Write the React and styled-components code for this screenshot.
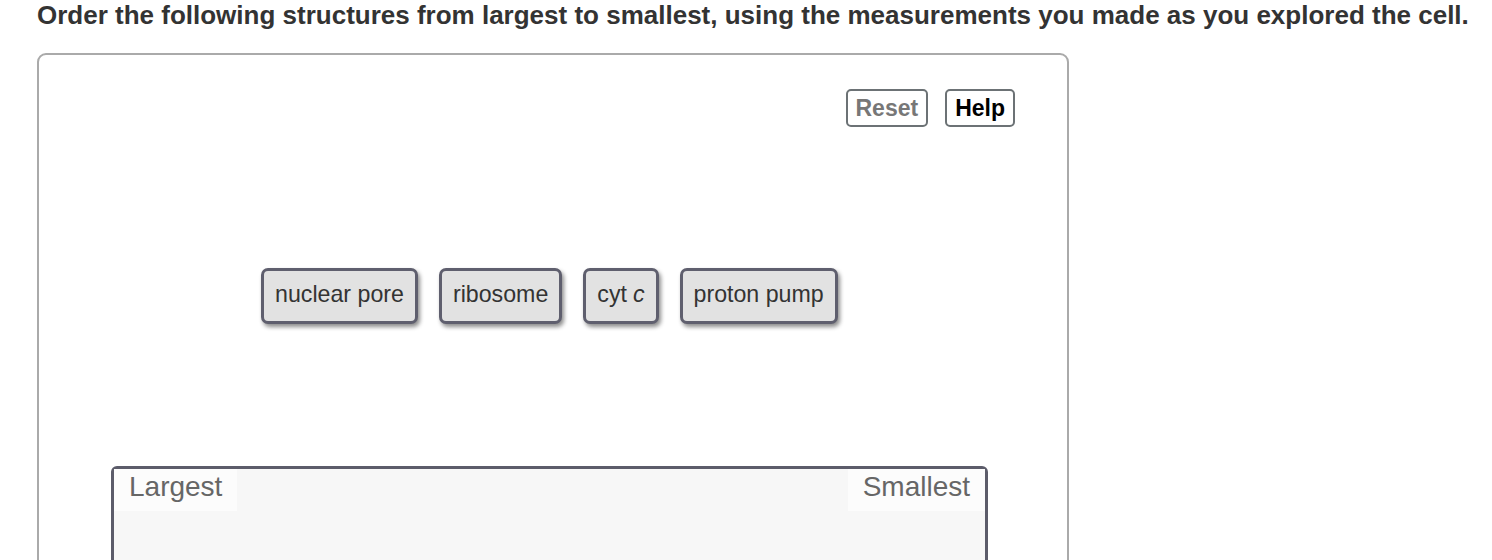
import React from 'react';
import styled, { createGlobalStyle } from 'styled-components';

const GlobalStyle = createGlobalStyle`
  html, body {
    margin: 0;
    padding: 0;
    background: #fff;
    font-family: "Liberation Sans", Arial, Helvetica, sans-serif;
  }
`;

const Page = styled.div`
  padding: 0 0 0 37px;
  width: 1492px;
  box-sizing: border-box;
`;

const Title = styled.h1`
  margin: 0;
  font-size: 26px;
  line-height: 30px;
  font-weight: bold;
  color: #333;
  white-space: nowrap;
`;

const Panel = styled.div`
  margin-top: 23px;
  width: 1032px;
  height: 560px;
  box-sizing: border-box;
  border: 2px solid #aaa;
  border-radius: 9px;
  padding: 34px 52px 0 72px;
`;

const Toolbar = styled.div`
  display: flex;
  justify-content: flex-end;
  gap: 17px;
`;

const ToolButton = styled.button`
  font-family: "Liberation Sans", Arial, sans-serif;
  font-weight: bold;
  font-size: 23px;
  line-height: 30px;
  height: 38px;
  padding: 0 8px;
  background: #fff;
  border: 2px solid #6c7275;
  border-radius: 5px;
  color: ${({ $muted }) => ($muted ? '#777' : '#000')};
`;

const ChipRow = styled.div`
  display: flex;
  gap: 21px;
  margin-top: 141px;
  padding-left: 150px;
`;

const Chip = styled.div`
  height: 56px;
  box-sizing: border-box;
  padding: 0 11px 3px;
  display: flex;
  align-items: center;
  font-size: 23.2px;
  color: #333;
  background: #e2e2e2;
  border: 3px solid #5f5f6e;
  border-radius: 7px;
  box-shadow: 2px 3px 4px rgba(0, 0, 0, 0.45);

  i {
    font-style: italic;
    margin-left: 6px;
  }
`;

const DropZone = styled.div`
  margin-top: 142px;
  width: 877px;
  height: 200px;
  box-sizing: border-box;
  border: 3px solid #5c5c6a;
  border-radius: 6px;
  background: #f7f7f7;
  display: flex;
  justify-content: space-between;
  align-items: flex-start;
`;

const Label = styled.div`
  background: #fcfcfc;
  color: #666;
  font-size: 28px;
  line-height: 36px;
  padding: 0 15px 6px;
`;

export default function App() {
  return (
    <>
      <GlobalStyle />
      <Page>
        <Title>
          Order the following structures from largest to smallest, using the measurements you made as you explored the cell.
        </Title>
        <Panel>
          <Toolbar>
            <ToolButton $muted>Reset</ToolButton>
            <ToolButton>Help</ToolButton>
          </Toolbar>
          <ChipRow>
            <Chip>nuclear pore</Chip>
            <Chip>ribosome</Chip>
            <Chip>cyt<i>c</i></Chip>
            <Chip>proton pump</Chip>
          </ChipRow>
          <DropZone>
            <Label>Largest</Label>
            <Label>Smallest</Label>
          </DropZone>
        </Panel>
      </Page>
    </>
  );
}
